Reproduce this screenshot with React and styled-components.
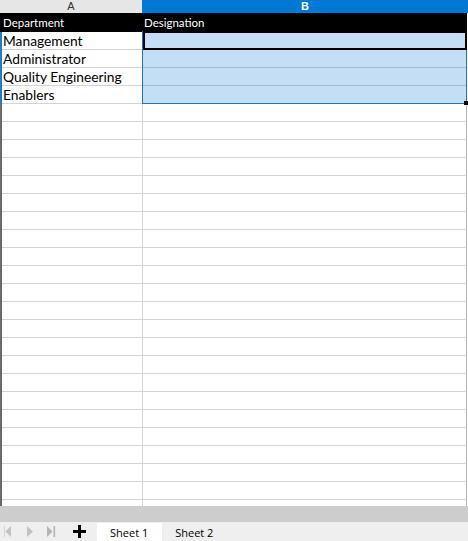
import React from 'react';
import styled, { createGlobalStyle } from 'styled-components';

const Global = createGlobalStyle`
  html, body { margin: 0; padding: 0; background: #fff; overflow: hidden; }
  #root { width: 468px; height: 541px; }
`;

const GRID = '#d4d4d4';
const SEL_GRID = '#9fbbd6';

const Sheet = styled.div`
  width: 468px;
  height: 541px;
  display: flex;
  flex-direction: column;
  overflow: hidden;
  font-family: Lato, "Open Sans", sans-serif;
`;

const ColHeaderRow = styled.div`
  flex: none;
  display: grid;
  grid-template-columns: 142px 1fr;
  height: 13px;
`;

const ColHeader = styled.div`
  background: ${p => (p.$active ? '#0078d4' : '#e6e6e6')};
  color: ${p => (p.$active ? '#ffffff' : '#333333')};
  font-family: "Liberation Sans", sans-serif;
  font-weight: ${p => (p.$active ? 700 : 400)};
  font-size: 11px;
  line-height: 13px;
  text-align: center;
`;

const Grid = styled.div`
  position: relative;
  flex: 1;
  overflow: hidden;
  width: 468px;
`;

const Row = styled.div`
  display: grid;
  grid-template-columns: 2px 141px 324px;
  height: ${p => (p.$head ? 19 : 18)}px;
`;

const RowStub = styled.div`
  background: ${p => (p.$head ? '#000' : p.$selected ? '#1d7dd0' : '#6b6b6b')};
`;

const Cell = styled.div`
  box-sizing: border-box;
  border-right: 1px solid ${p => (p.$head ? '#000' : p.$edge ? '#b8b8b8' : GRID)};
  border-bottom: 1px solid ${p => (p.$head ? '#000' : p.$selected ? SEL_GRID : GRID)};
  background: ${p => (p.$head ? '#000' : p.$selected ? '#c4def5' : '#fff')};
  color: ${p => (p.$head ? '#fff' : '#000')};
  font-size: ${p => (p.$head ? 11.5 : 13.8)}px;
  line-height: ${p => (p.$head ? 19 : 17)}px;
  padding-left: 1px;
  white-space: nowrap;
  overflow: hidden;
`;

const SelectionRange = styled.div`
  position: absolute;
  left: 142px;
  top: 18px;
  width: 325px;
  height: 73px;
  box-sizing: border-box;
  border: 1px solid #1a74c9;
  pointer-events: none;
`;

const ActiveCell = styled.div`
  position: absolute;
  left: 143px;
  top: 18px;
  width: 324px;
  height: 19px;
  box-sizing: border-box;
  border: 2px solid #000;
  pointer-events: none;
`;

const FillHandle = styled.div`
  position: absolute;
  left: 464px;
  top: 88px;
  width: 4px;
  height: 4px;
  background: #000;
`;

const ScrollBand = styled.div`
  flex: none;
  height: 16px;
  background: #cdcdcd;
`;

const TabBar = styled.div`
  flex: none;
  height: 19px;
  background: #efefef;
  display: flex;
  align-items: stretch;
`;

const NavGroup = styled.div`
  width: 62px;
  display: flex;
  align-items: center;
`;

const NavButton = styled.div`
  margin-left: ${p => p.$ml}px;
  display: flex;
  align-items: center;
`;

const AddButton = styled.div`
  width: 35px;
  display: flex;
  align-items: center;
  justify-content: center;
`;

const Tab = styled.div`
  margin-top: 1px;
  padding: 1px 14px 0 13px;
  background: ${p => (p.$active ? '#ffffff' : 'transparent')};
  font-family: "Open Sans", sans-serif;
  font-size: 11px;
  line-height: 17px;
  color: #000;
  white-space: nowrap;
`;

const rows = ['Management', 'Administrator', 'Quality Engineering', 'Enablers'];
const TOTAL = 28;

export default function App() {
  const list = [];
  for (let i = 0; i < TOTAL; i++) list.push(rows[i] || '');
  return (
    <Sheet>
      <Global />
      <ColHeaderRow>
        <ColHeader>A</ColHeader>
        <ColHeader $active>B</ColHeader>
      </ColHeaderRow>
      <Grid>
        <Row $head>
          <RowStub $head />
          <Cell $head>Department</Cell>
          <Cell $head>Designation</Cell>
        </Row>
        {list.map((txt, i) => {
          const sel = i < 4;
          return (
            <Row key={i}>
              <RowStub $selected={sel} />
              <Cell>{txt}</Cell>
              <Cell $selected={sel} $edge />
            </Row>
          );
        })}
        <SelectionRange />
        <ActiveCell />
        <FillHandle />
      </Grid>
      <ScrollBand />
      <TabBar>
        <NavGroup>
          <NavButton $ml={4}>
            <svg width="7" height="11" viewBox="0 0 7 11">
              <rect x="0" y="0" width="1" height="11" fill="#d6d6d6" />
              <polygon points="7,0 1.5,5.5 7,11" fill="#c2c2c2" />
            </svg>
          </NavButton>
          <NavButton $ml={16}>
            <svg width="6" height="11" viewBox="0 0 6 11">
              <polygon points="0,0 6,5.5 0,11" fill="#c2c2c2" />
            </svg>
          </NavButton>
          <NavButton $ml={14}>
            <svg width="9" height="11" viewBox="0 0 9 11">
              <polygon points="0,0 5.5,5.5 0,11" fill="#b4b4b4" />
              <rect x="6.5" y="0" width="1.6" height="11" fill="#b4b4b4" />
            </svg>
          </NavButton>
        </NavGroup>
        <AddButton>
          <svg width="13" height="13" viewBox="0 0 13 13">
            <rect x="5" y="0" width="3" height="13" fill="#000" />
            <rect x="0" y="5" width="13" height="3" fill="#000" />
          </svg>
        </AddButton>
        <Tab $active>Sheet 1</Tab>
        <Tab>Sheet 2</Tab>
      </TabBar>
    </Sheet>
  );
}
